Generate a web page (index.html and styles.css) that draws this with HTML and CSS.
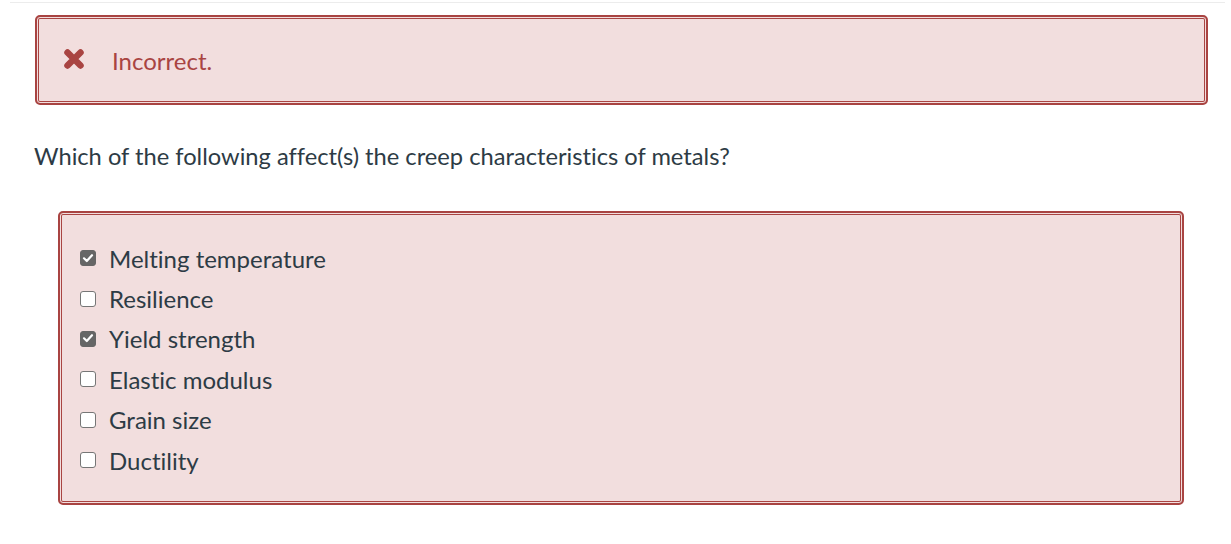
FILE: index.html
```html
<!DOCTYPE html>
<html>
<head>
<meta charset="utf-8">
<link rel="stylesheet" href="styles.css">
</head>
<body>
<div class="page">
  <div class="alert">
    <svg class="xicon" viewBox="0 0 22 22" width="22" height="22">
      <path d="M4.5 4.5 L17.5 17.5 M17.5 4.5 L4.5 17.5" stroke="#a94442" stroke-width="6.5" stroke-linecap="round"/>
    </svg>
    <span class="alert-text">Incorrect.</span>
  </div>
  <p class="question">Which of the following affect(s) the creep characteristics of metals?</p>
  <div class="answers">
    <label class="opt"><span class="cb checked"><svg viewBox="0 0 16 16" width="16" height="16"><path d="M4 8.3 L6.8 11 L12 5.2" fill="none" stroke="#fff" stroke-width="2.2" stroke-linecap="round" stroke-linejoin="round"/></svg></span>Melting temperature</label>
    <label class="opt"><span class="cb"></span>Resilience</label>
    <label class="opt"><span class="cb checked"><svg viewBox="0 0 16 16" width="16" height="16"><path d="M4 8.3 L6.8 11 L12 5.2" fill="none" stroke="#fff" stroke-width="2.2" stroke-linecap="round" stroke-linejoin="round"/></svg></span>Yield strength</label>
    <label class="opt"><span class="cb"></span>Elastic modulus</label>
    <label class="opt"><span class="cb"></span>Grain size</label>
    <label class="opt"><span class="cb"></span>Ductility</label>
  </div>
</div>
</body>
</html>
```

FILE: styles.css
```css
html, body {
  margin: 0;
  padding: 0;
  background: #fff;
}
body {
  font-family: Lato, "Open Sans", sans-serif;
  color: #2d3b45;
  font-variant-ligatures: none;
}
.page {
  margin: 2px 6px 0 10px;
  border-top: 1px solid #ececec;
  padding-top: 12px;
  height: 520px;
  overflow: hidden;
}
.alert {
  margin: 0 17px 0 25px;
  height: 90px;
  box-sizing: border-box;
  background: #f2dede;
  border: 2px solid #a94442;
  border-radius: 5px;
  box-shadow: inset 0 0 0 1px #f2dede, inset 0 0 0 2px #a94442;
  display: flex;
  align-items: center;
  padding-left: 26px;
}
.xicon {
  display: block;
  margin-top: -3px;
}
.alert-text {
  color: #a94442;
  font-size: 24px;
  margin-left: 27px;
}
.question {
  margin: 33px 0 0 24px;
  font-size: 23.7px;
  line-height: 36px;
}
.answers {
  margin: 37px 41px 0 48px;
  height: 294px;
  box-sizing: border-box;
  background: #f2dede;
  border: 2px solid #a94442;
  border-radius: 5px;
  box-shadow: inset 0 0 0 1px #f2dede, inset 0 0 0 2px #a94442;
  padding: 25px 0 0 20px;
  display: flex;
  flex-direction: column;
}
.opt {
  display: flex;
  align-items: center;
  height: 40.4px;
  font-size: 24px;
  color: #2d3b45;
}
.cb {
  width: 16px;
  height: 16px;
  box-sizing: border-box;
  border: 1.5px solid #767676;
  border-radius: 3px;
  background: #fff;
  margin-right: 13px;
  display: flex;
}
.cb.checked {
  background: #666;
  border-color: #666;
}
.cb svg {
  display: block;
  margin: -1.5px;
}
```
